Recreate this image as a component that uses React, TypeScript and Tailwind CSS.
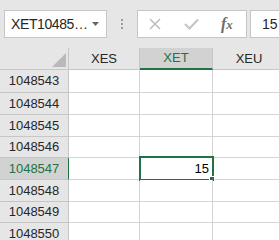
import React from 'react';

const rows = [
  { n: 1048543, h: 'h-[23px]' },
  { n: 1048544, h: 'h-[22px]' },
  { n: 1048545, h: 'h-[22px]' },
  { n: 1048546, h: 'h-[21px]' },
  { n: 1048547, h: 'h-[22px]', active: true },
  { n: 1048548, h: 'h-[22px]' },
  { n: 1048549, h: 'h-[21px]' },
  { n: 1048550, h: 'h-[22px]' },
];

function FormulaBar() {
  return (
    <div className="flex h-[48px] items-start pt-[10px]">
      <div className="relative ml-[4px] flex h-[28px] w-[103px] items-center border border-[#c6c6c6] bg-white pl-[6px] text-[14px] tracking-[-0.4px] text-[#262626]">
        XET10485…
        <svg className="absolute right-[7px] top-[11px]" width="7" height="4" viewBox="0 0 7 4">
          <polygon points="0,0 7,0 3.5,4" fill="#666" />
        </svg>
      </div>
      <div className="flex h-[28px] w-[30px] flex-col items-center justify-center gap-[2px]">
        <span className="block h-[2px] w-[2px] bg-[#9a9a9a]" />
        <span className="block h-[2px] w-[2px] bg-[#9a9a9a]" />
        <span className="block h-[2px] w-[2px] bg-[#9a9a9a]" />
      </div>
      <div className="flex h-[28px] w-[110px] items-center border border-[#c6c6c6] bg-white">
        <svg className="ml-[11px]" width="12" height="12" viewBox="0 0 12 12">
          <path d="M1 1 L11 11 M11 1 L1 11" stroke="#bdbdbd" strokeWidth="1.5" fill="none" />
        </svg>
        <svg className="ml-[23px]" width="15" height="12" viewBox="0 0 15 12">
          <path d="M1 6 L5.5 10.5 L14 1.5" stroke="#c4c4c4" strokeWidth="2" fill="none" />
        </svg>
        <span className="ml-[22px] font-['Liberation_Serif',serif] text-[16px] font-bold italic text-[#6d6d6d]">
          f<span className="text-[13px]">x</span>
        </span>
      </div>
      <div className="ml-[3px] flex h-[28px] flex-1 items-center border border-r-0 border-[#c6c6c6] bg-white pl-[11px] text-[14px] text-[#262626]">
        15
      </div>
    </div>
  );
}

function HeaderRow() {
  return (
    <div className="flex h-[22px]">
      <div className="relative w-[69px] shrink-0 border-r border-b border-[#c6c6c6]">
        <svg className="absolute bottom-[2px] right-[2px]" width="14" height="14" viewBox="0 0 14 14">
          <polygon points="14,0 14,14 0,14" fill="#b9b9b9" />
        </svg>
      </div>
      <div className="flex w-[71px] shrink-0 items-center justify-center border-r border-b border-[#c6c6c6] text-[#262626]">
        XES
      </div>
      <div className="flex w-[73px] shrink-0 items-center justify-center border-r border-b-2 border-r-[#c6c6c6] border-b-[#217346] bg-[#d2d2d2] text-[#217346]">
        XET
      </div>
      <div className="flex w-[72px] shrink-0 items-center justify-center border-b border-[#c6c6c6] text-[#262626]">
        XEU
      </div>
    </div>
  );
}

export default function App() {
  return (
    <div className="h-[240px] w-[279px] overflow-hidden bg-[#e6e6e6] font-['Liberation_Sans',Arial,sans-serif] text-[13px]">
      <FormulaBar />
      <HeaderRow />
      {rows.map((r) => (
        <div key={r.n} className={`flex ${r.h}`}>
          <div
            className={
              r.active
                ? 'flex w-[69px] shrink-0 items-center justify-center border-r border-b border-r-[#217346] border-b-[#c6c6c6] bg-[#d2d2d2] text-[#217346]'
                : 'flex w-[69px] shrink-0 items-center justify-center border-r border-b border-[#c6c6c6] text-[#262626]'
            }
          >
            {r.n}
          </div>
          <div className="w-[71px] shrink-0 border-r border-b border-[#d4d4d4] bg-white" />
          <div className="relative flex w-[73px] shrink-0 items-center justify-end border-r border-b border-[#d4d4d4] bg-white pr-[3px] text-black">
            {r.active && (
              <>
                15
                <div className="absolute -bottom-[2px] -left-[1px] -right-[2px] -top-[2px] border-2 border-[#217346]" />
                <div className="absolute -bottom-[3px] -right-[3px] h-[6px] w-[6px] border border-white bg-[#217346]" />
              </>
            )}
          </div>
          <div className="w-[72px] shrink-0 border-b border-[#d4d4d4] bg-white" />
        </div>
      ))}
    </div>
  );
}
